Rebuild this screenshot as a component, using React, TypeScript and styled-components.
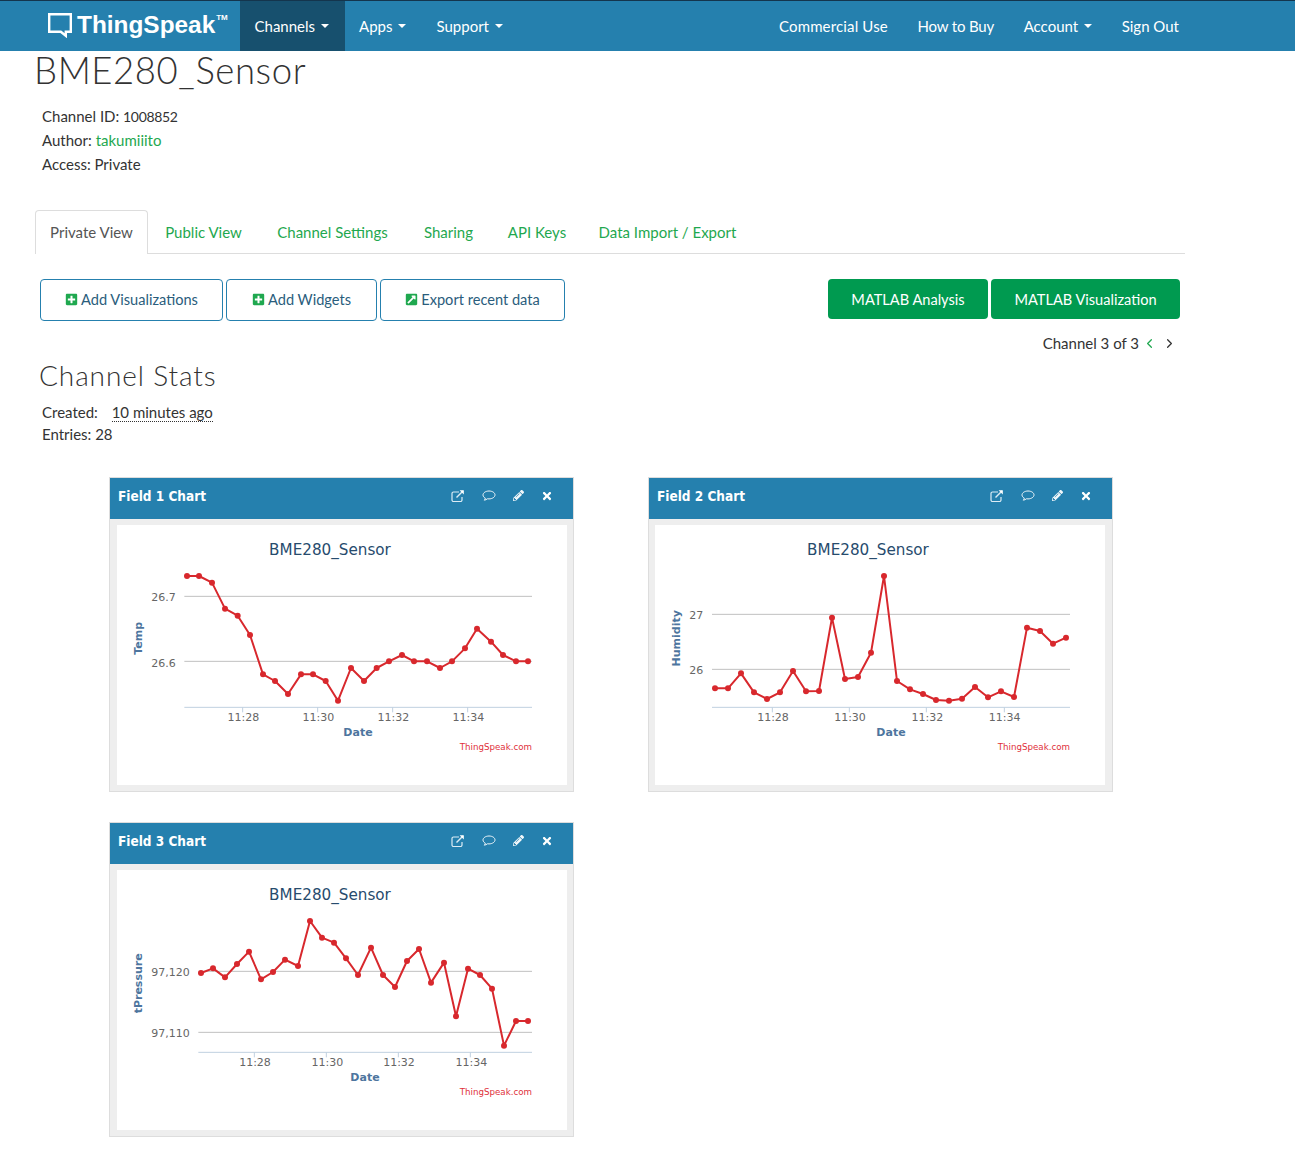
import React from "react";
import styled, { createGlobalStyle } from "styled-components";
import { FaPlusSquare, FaExternalLinkSquareAlt, FaPencilAlt, FaTimes } from "react-icons/fa";
import { ChevronLeft, ChevronRight } from "lucide-react";

const Global = createGlobalStyle`
  html, body { margin: 0; padding: 0; background: #fff; }
  body { font-family: "Lato", "Open Sans", sans-serif; color: #333; font-size: 15px; }
  * { box-sizing: border-box; }
`;

const Page = styled.div`
  width: 1295px;
  min-height: 1149px;
`;

const Nav = styled.nav`
  display: flex;
  height: 51px;
  background: #2580ae;
  border-top: 1px solid #14354d;
  color: #fff;
`;

const Brand = styled.div`
  display: flex;
  align-items: center;
  width: 240px;
  padding-left: 47px;
  padding-bottom: 2px;
`;

const BrandName = styled.span`
  font-family: "Liberation Sans", sans-serif;
  font-weight: 700;
  font-size: 24.4px;
  margin-left: 4px;
`;

const Tm = styled.sup`
  font-family: "Liberation Sans", sans-serif;
  font-size: 8px;
  font-weight: 700;
  margin-left: 1px;
  align-self: flex-start;
  margin-top: 12px;
`;

const NavGroup = styled.div<{ $right?: boolean }>`
  display: flex;
  margin-left: ${(p) => (p.$right ? "auto" : "0")};
  padding-right: ${(p) => (p.$right ? "101px" : "0")};
  a { padding-right: ${(p) => (p.$right ? "15px" : "15.5px")}; }
`;

const NavItem = styled.a<{ $active?: boolean; $spacing?: number }>`
  display: flex;
  align-items: center;
  padding: 0 15px 0 14.5px;
  font-size: 15px;
  letter-spacing: ${(p) => p.$spacing ?? 0}px;
  color: #fff;
  background: ${(p) => (p.$active ? "#17506e" : "transparent")};
`;

const Caret = styled.span`
  display: inline-block;
  margin-left: 6px;
  width: 0;
  height: 0;
  border-left: 4px solid transparent;
  border-right: 4px solid transparent;
  border-top: 4px solid #fff;
`;

const Content = styled.main`
  padding-left: 35px;
  width: 1185px;
`;

const Title = styled.h1`
  margin: 0 0 0 -1px;
  height: 50px;
  font-family: "Lato", sans-serif;
  font-weight: 300;
  font-size: 36.5px;
  line-height: 38px;
  letter-spacing: 0.58px;
  color: #333;
`;

const Meta = styled.div`
  padding: 3px 0 0 7px;
  height: 109px;
`;

const MetaLine = styled.div`
  height: 24px;
  line-height: 24px;
  font-size: 15px;
`;

const Digits = styled.span`
  font-size: 14px;
  letter-spacing: -0.35px;
`;

const GreenLink = styled.a`
  color: #1fa84f;
`;

const Tabs = styled.div`
  display: flex;
  height: 44px;
  border-bottom: 1px solid #ddd;
`;

const Tab = styled.a<{ $active?: boolean; $w: number }>`
  display: flex;
  align-items: center;
  justify-content: center;
  width: ${(p) => p.$w}px;
  height: 44px;
  padding-bottom: ${(p) => (p.$active ? "2px" : "0")};
  font-size: 15px;
  color: ${(p) => (p.$active ? "#555" : "#1fa84f")};
  background: ${(p) => (p.$active ? "#fff" : "transparent")};
  border: ${(p) => (p.$active ? "1px solid #ddd" : "0")};
  border-bottom: 0;
  border-radius: 4px 4px 0 0;
`;

const ActionRow = styled.div`
  display: flex;
  align-items: flex-start;
  margin-top: 25px;
  padding-left: 5px;
  padding-right: 5px;
  gap: 3px;
`;

const OutlineButton = styled.a<{ $w: number }>`
  display: flex;
  align-items: center;
  justify-content: center;
  gap: 3px;
  width: ${(p) => p.$w}px;
  height: 42px;
  padding-bottom: 2px;
  font-size: 14.6px;
  color: #2a5d7c;
  border: 1px solid #2580ae;
  border-radius: 4px;
  svg { color: #1fa84f; width: 13px; height: 13px; }
`;

const GreenButton = styled.a<{ $w: number }>`
  display: flex;
  align-items: center;
  justify-content: center;
  width: ${(p) => p.$w}px;
  height: 40px;
  font-size: 14.6px;
  color: #fff;
  background: #009a50;
  border-radius: 4px;
`;

const Spacer = styled.div`
  flex: 1;
`;

const Pager = styled.div`
  display: flex;
  justify-content: flex-end;
  align-items: center;
  height: 22px;
  margin-top: 11px;
  padding-right: 8px;
  font-size: 15px;
`;

const PagerIcon = styled.span<{ $green?: boolean }>`
  display: flex;
  margin-left: ${(p) => (p.$green ? "3px" : "5px")};
  color: ${(p) => (p.$green ? "#1fa84f" : "#333")};
`;

const SectionTitle = styled.h2`
  margin: 2px 0 0 4px;
  height: 45px;
  font-family: "Lato", sans-serif;
  font-weight: 300;
  font-size: 28px;
  line-height: 38px;
  letter-spacing: 0.9px;
  color: #333;
`;

const StatLine = styled.div`
  height: 22px;
  line-height: 22px;
  padding-left: 7px;
  font-size: 15px;
`;

const Abbr = styled.span`
  margin-left: 10px;
  border-bottom: 1px dotted #333;
`;

const Grid = styled.div`
  display: grid;
  grid-template-columns: 465px 465px;
  column-gap: 74px;
  row-gap: 30px;
  margin: 32px 0 0 74px;
  width: 1004px;
`;

const Card = styled.section`
  height: 315px;
  background: #eee;
  border: 1px solid #ddd;
  display: flex;
  flex-direction: column;
`;

const CardHeader = styled.header`
  display: flex;
  align-items: center;
  flex: none;
  height: 41px;
  background: #2580ae;
  color: #fff;
  padding: 0 20px 6px 8px;
`;

const CardTitle = styled.div`
  flex: 1;
  font-family: "DejaVu Sans", sans-serif;
  font-stretch: condensed;
  font-weight: 700;
  font-size: 13.5px;
`;

const CardIcons = styled.div`
  display: flex;
  align-items: center;
  gap: 17px;
  svg { display: block; }
`;

const CardBody = styled.div<{ $inset: number }>`
  margin: 6px 0 6px ${(p) => p.$inset}px;
  width: 450px;
  height: 260px;
  background: #fff;
`;

const ChartSvg = styled.svg`
  display: block;
  width: 450px;
  height: 260px;
  text { font-family: "DejaVu Sans", sans-serif; }
`;

const ChartTitle = styled.text`
  font-size: 15.2px;
  fill: #274b6d;
`;

const TickLabel = styled.text`
  font-size: 11px;
  fill: #666;
`;

const AxisName = styled.text`
  font-size: 11px;
  font-weight: 700;
  fill: #4d759e;
`;

const Credit = styled.text`
  font-size: 8.7px;
  fill: #e0303a;
`;

const LinkOutIcon = () => (
  <svg width="14" height="14" viewBox="0 0 14 14" fill="none" stroke="#dcecf5" strokeWidth="1.2">
    <path d="M11 8v3a1.5 1.5 0 0 1-1.5 1.5h-7A1.5 1.5 0 0 1 1 11V4.5A1.5 1.5 0 0 1 2.5 3H8" />
    <path d="M5.5 8.5 12 2" strokeWidth="1.5" />
    <path d="M8.6 1.2h4.2v4.2z" fill="#fff" stroke="none" />
  </svg>
);

const BubbleIcon = () => (
  <svg width="14" height="14" viewBox="0 0 14 14" fill="none" stroke="#eef6fa" strokeWidth="1">
    <path d="M7 2C3.7 2 1 3.8 1 6c0 1.3.9 2.4 2.3 3.1-.1.8-.5 1.5-1 2.1 1.2-.2 2.3-.7 3.1-1.4.5.1 1 .1 1.6.1 3.3 0 6-1.8 6-4S10.3 2 7 2z" />
  </svg>
);

const BubbleLogo = () => (
  <svg width="26" height="26" viewBox="0 0 26 26" fill="none" stroke="#fff" strokeWidth="2.4">
    <path d="M2.2 2.2h21.6v17.6h-5v4l-5-4H2.2z" />
  </svg>
);

type ChartDef = {
  field: number;
  dx: number;
  inset: number;
  axisLeft: number;
  axisRight: number;
  grid: { y: number; label: string; labelY: number }[];
  labelRight: number;
  ticks: { x: number; label: number }[];
  dateX: number;
  yName: string;
  yNameX: number;
  pts: number[][];
};

const times = ["11:28", "11:30", "11:32", "11:34"];

const charts: ChartDef[] = [
  {
    field: 1, dx: 51, inset: 7, axisLeft: 253, axisRight: 1296, labelRight: 227, dateX: 774, yName: "Temp", yNameX: 115,
    grid: [{ y: 379, label: "26.7", labelY: 392 }, { y: 574, label: "26.6", labelY: 590 }],
    ticks: [{ x: 428, label: 430 }, { x: 653, label: 655 }, { x: 878, label: 880 }, { x: 1103, label: 1105 }],
    pts: [[261,318],[297,318],[336,338],[375,416],[413,437],[450,495],[489,613],[525,633],[564,672],[603,613],[639,613],[677,633],[714,692],[753,594],[792,633],[830,594],[867,574],[906,555],[942,574],[981,574],[1020,594],[1056,574],[1095,535],[1131,476],[1173,515],[1209,555],[1248,574],[1284,574]],
  },
  {
    field: 2, dx: 45, inset: 6, axisLeft: 216, axisRight: 1290, labelRight: 190, dateX: 753, yName: "Humidity", yNameX: 107,
    grid: [{ y: 433, label: "27", labelY: 448 }, { y: 598, label: "26", labelY: 611 }],
    ticks: [{ x: 397, label: 399 }, { x: 628, label: 630 }, { x: 859, label: 862 }, { x: 1093, label: 1094 }],
    pts: [[225,655],[264,655],[303,610],[342,667],[381,687],[420,667],[459,603],[498,664],[537,663],[576,443],[615,627],[654,621],[693,548],[732,318],[771,633],[810,658],[849,672],[888,690],[927,692],[966,686],[1005,651],[1044,682],[1083,664],[1122,681],[1161,473],[1200,483],[1239,521],[1278,503]],
  },
  {
    field: 3, dx: 51, inset: 7, axisLeft: 295, axisRight: 1296, labelRight: 269, dateX: 795, yName: "tPressure", yNameX: 115,
    grid: [{ y: 469, label: "97,120", labelY: 482 }, { y: 652, label: "97,110", labelY: 665 }],
    ticks: [{ x: 463, label: 465 }, { x: 679, label: 682 }, { x: 895, label: 897 }, { x: 1111, label: 1114 }],
    pts: [[303,474],[339,460],[375,487],[411,447],[447,410],[483,493],[519,471],[555,434],[594,453],[630,318],[666,368],[702,383],[738,430],[774,480],[813,398],[849,480],[885,516],[921,438],[957,402],[993,503],[1032,443],[1068,604],[1104,461],[1140,480],[1176,521],[1212,692],[1248,618],[1284,618]],
  },
];

const Chart = ({ c }: { c: ChartDef }) => {
  const X = (z: number) => (z - c.dx) / 3;
  const Y = (z: number) => (z - 165) / 3;
  const line = c.pts.map(([x, y]) => `${X(x)},${Y(y)}`).join(" ");
  const titleX = X(c.dx + 639);
  return (
    <ChartSvg viewBox="0 0 450 260">
      <ChartTitle x={titleX} y={Y(254)} textAnchor="middle">BME280_Sensor</ChartTitle>
      {c.grid.map((g) => (
        <g key={g.label}>
          <line x1={X(c.axisLeft)} x2={X(c.axisRight)} y1={Y(g.y)} y2={Y(g.y)} stroke="#c0c0c0" />
          <TickLabel x={X(c.labelRight)} y={Y(g.labelY)} textAnchor="end">{g.label}</TickLabel>
        </g>
      ))}
      <line x1={X(c.axisLeft)} x2={X(c.axisRight)} y1={Y(712)} y2={Y(712)} stroke="#c0d0e0" />
      {c.ticks.map((t, i) => (
        <g key={t.x}>
          <line x1={X(t.x)} x2={X(t.x)} y1={Y(712)} y2={Y(727)} stroke="#c0d0e0" />
          <TickLabel x={X(t.label)} y={Y(752)} textAnchor="middle">{times[i]}</TickLabel>
        </g>
      ))}
      <AxisName x={X(c.dateX)} y={Y(798)} textAnchor="middle">Date</AxisName>
      <AxisName transform={`translate(${X(c.yNameX + 12)} ${Y(505)}) rotate(-90)`} textAnchor="middle">{c.yName}</AxisName>
      <Credit x={X(c.axisRight)} y={Y(840)} textAnchor="end">ThingSpeak.com</Credit>
      <polyline points={line} fill="none" stroke="#d8282d" strokeWidth="2" strokeLinejoin="round" />
      {c.pts.map(([x, y], i) => (
        <circle key={i} cx={X(x)} cy={Y(y)} r="3" fill="#d8282d" />
      ))}
    </ChartSvg>
  );
};

const tabs = [
  { label: "Private View", w: 113, active: true },
  { label: "Public View", w: 111 },
  { label: "Channel Settings", w: 147 },
  { label: "Sharing", w: 85 },
  { label: "API Keys", w: 92 },
  { label: "Data Import / Export", w: 169 },
];

export default function App() {
  return (
    <Page>
      <Global />
      <Nav>
        <Brand>
          <BubbleLogo />
          <BrandName>ThingSpeak</BrandName>
          <Tm>TM</Tm>
        </Brand>
        <NavGroup>
          <NavItem $active>Channels<Caret /></NavItem>
          <NavItem>Apps<Caret /></NavItem>
          <NavItem>Support<Caret /></NavItem>
        </NavGroup>
        <NavGroup $right>
          <NavItem $spacing={0.15}>Commercial Use</NavItem>
          <NavItem $spacing={-0.15}>How to Buy</NavItem>
          <NavItem>Account<Caret /></NavItem>
          <NavItem>Sign Out</NavItem>
        </NavGroup>
      </Nav>
      <Content>
        <Title>BME280_Sensor</Title>
        <Meta>
          <MetaLine>Channel ID: <Digits>1008852</Digits></MetaLine>
          <MetaLine>Author: <GreenLink>takumiiito</GreenLink></MetaLine>
          <MetaLine>Access: Private</MetaLine>
        </Meta>
        <Tabs>
          {tabs.map((t) => (
            <Tab key={t.label} $active={t.active} $w={t.w}>{t.label}</Tab>
          ))}
        </Tabs>
        <ActionRow>
          <OutlineButton $w={183}><FaPlusSquare />Add Visualizations</OutlineButton>
          <OutlineButton $w={151}><FaPlusSquare />Add Widgets</OutlineButton>
          <OutlineButton $w={185}><FaExternalLinkSquareAlt />Export recent data</OutlineButton>
          <Spacer />
          <GreenButton $w={160}>MATLAB Analysis</GreenButton>
          <GreenButton $w={189}>MATLAB Visualization</GreenButton>
        </ActionRow>
        <Pager>
          Channel 3 of 3
          <PagerIcon $green><ChevronLeft size={15} /></PagerIcon>
          <PagerIcon><ChevronRight size={15} /></PagerIcon>
        </Pager>
        <SectionTitle>Channel Stats</SectionTitle>
        <StatLine>Created: <Abbr>10 minutes ago</Abbr></StatLine>
        <StatLine>Entries: 28</StatLine>
        <Grid>
          {charts.map((c) => (
            <Card key={c.field}>
              <CardHeader>
                <CardTitle>Field {c.field} Chart</CardTitle>
                <CardIcons>
                  <LinkOutIcon />
                  <BubbleIcon />
                  <FaPencilAlt size={11} color="#f2f7fa" />
                  <FaTimes size={12} color="#fff" />
                </CardIcons>
              </CardHeader>
              <CardBody $inset={c.inset}>
                <Chart c={c} />
              </CardBody>
            </Card>
          ))}
        </Grid>
      </Content>
    </Page>
  );
}
